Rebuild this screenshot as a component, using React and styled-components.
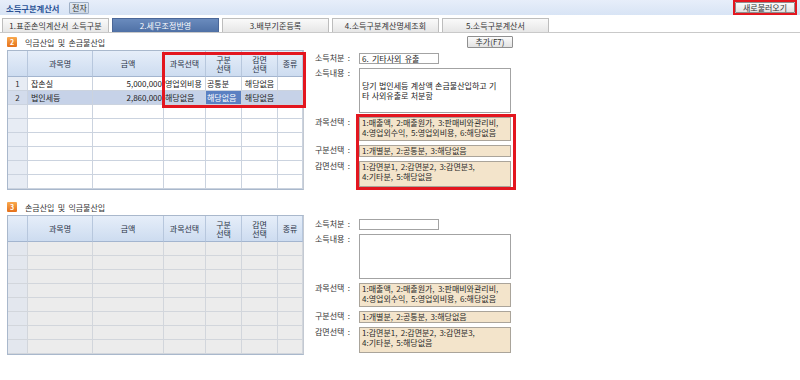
import React from "react";
import styled, { createGlobalStyle } from "styled-components";

const GlobalStyle = createGlobalStyle`
  html, body { margin: 0; padding: 0; background: #fff; }
  body {
    font-family: "Noto Sans CJK KR", "Noto Sans", sans-serif;
    font-size: 8px;
    word-spacing: 1.5px;
    color: #222;
  }
  * { box-sizing: border-box; }
`;

const Page = styled.div`
  width: 800px;
  height: 380px;
  overflow: hidden;
  background: #fff;
`;

const TitleBar = styled.div`
  height: 15px;
  display: flex;
  align-items: center;
  justify-content: space-between;
  padding: 0 3px 0 6px;
  background: linear-gradient(#e7eefa, #d8e4f5);
`;

const TitleGroup = styled.div`
  display: flex;
  align-items: center;
  gap: 10px;
`;

const Title = styled.span`
  font-weight: 700;
  font-size: 8.3px;
  color: #2b5396;
`;

const Btn = styled.button`
  height: ${({ $h }) => $h || 12}px;
  width: ${({ $w }) => ($w ? `${$w}px` : "auto")};
  padding: 0;
  margin: 0;
  font: inherit;
  font-size: 8px;
  line-height: 1;
  white-space: nowrap;
  color: #333;
  border: 1px solid ${({ $tone }) => ($tone === "blue" ? "#9fb0c6" : "#8f8f8f")};
  border-radius: 1px;
  background: ${({ $tone }) =>
    $tone === "blue"
      ? "linear-gradient(#e3eaf3, #ccd7e5)"
      : "linear-gradient(#fbfbfb, #e2e2e2)"};
  display: flex;
  align-items: center;
  justify-content: center;
`;

const RedFrame = styled.div`
  border: 2px solid #e3161f;
  padding: 0;
`;

const TabRow = styled.div`
  display: flex;
  gap: 3px;
  margin-top: 3px;
  padding-left: 2px;
  height: 15px;
  border-bottom: 1px solid #c9c9c9;
`;

const Tab = styled.div`
  width: 107px;
  height: 14px;
  display: flex;
  align-items: center;
  justify-content: center;
  font-size: 8px;
  letter-spacing: 0.1px;
  white-space: nowrap;
  border: 1px solid ${({ $active }) => ($active ? "#4b6798" : "#bdbdbd")};
  border-bottom: none;
  color: ${({ $active }) => ($active ? "#fff" : "#333")};
  background: ${({ $active }) =>
    $active
      ? "linear-gradient(#6a8bbd, #4f71a6)"
      : "linear-gradient(#fafafa, #e6e6e6)"};
`;

const Section = styled.section`
  display: grid;
  grid-template-columns: 297px 198px;
  column-gap: 11px;
  padding-left: 7px;
  margin-top: ${({ $top }) => $top}px;
`;

const SectionHead = styled.div`
  height: 16px;
  display: flex;
  align-items: center;
  gap: 8px;
  font-size: 8px;
  color: #333;
`;

const Badge = styled.span`
  width: 10px;
  height: 10px;
  border-radius: 1px;
  background: linear-gradient(#f9a94f, #e5701a);
  color: #fff;
  font-size: 7px;
  font-weight: 700;
  display: flex;
  align-items: center;
  justify-content: center;
`;

const HeadTools = styled.div`
  height: 16px;
  display: flex;
  align-items: center;
  justify-content: flex-end;
`;

const Grid = styled.div`
  position: relative;
  display: grid;
  grid-template-columns: 20px 65px 71px 42px 36px 36px 25px;
  grid-template-rows: 26px repeat(8, 14px);
  width: 297px;
  border: 1px solid #a9b8cc;
  border-right-color: #c3c9d2;
`;

const HeadCell = styled.div`
  display: flex;
  align-items: center;
  justify-content: center;
  text-align: center;
  white-space: pre-line;
  line-height: 9px;
  color: #2a3346;
  background: linear-gradient(#e6eef9, #cddcf0);
  border-right: 1px solid #b7c7dd;
  border-bottom: 1px solid #a3b5cf;
`;

const tones = {
  white: { bg: "#fff", fg: "#222" },
  num: { bg: "#e7ecf4", fg: "#333" },
  sel: { bg: "#c6d2e8", fg: "#222" },
  selNum: { bg: "#d3dcec", fg: "#333" },
  hit: { bg: "#5a80c2", fg: "#fff" },
  off: { bg: "#ececec", fg: "#222" },
  offNum: { bg: "#e3e7ee", fg: "#333" },
};

const Cell = styled.div`
  display: flex;
  align-items: center;
  justify-content: ${({ $align }) =>
    $align === "right" ? "flex-end" : $align === "center" ? "center" : "flex-start"};
  padding: 0 ${({ $pad }) => $pad ?? 1}px;
  white-space: nowrap;
  overflow: hidden;
  background: ${({ $tone }) => tones[$tone].bg};
  color: ${({ $tone }) => tones[$tone].fg};
  border-right: 1px solid ${({ $tone }) => ($tone.startsWith("off") ? "#d2d6dc" : "#cbd3df")};
  border-bottom: 1px solid ${({ $tone }) => ($tone.startsWith("off") ? "#d2d6dc" : "#cbd3df")};
`;

const Mark = styled.div`
  position: absolute;
  grid-column: ${({ $col }) => $col};
  grid-row: ${({ $row }) => $row};
  inset: ${({ $inset }) => $inset};
  border: 3px solid #e3161f;
  pointer-events: none;
  z-index: 2;
`;

const Form = styled.div`
  position: relative;
  display: grid;
  grid-template-columns: 44px 152px;
  grid-template-rows: 11px 45px 24px 12px 26px;
  row-gap: 4px;
  margin-top: ${({ $top }) => $top}px;
  align-self: start;
`;

const Label = styled.div`
  line-height: 10px;
  white-space: nowrap;
  color: #333;
`;

const Input = styled.div`
  width: 80px;
  height: 11px;
  border: 1px solid #a3a3a3;
  background: #fff;
  padding: 0 2px;
  line-height: 9px;
  white-space: nowrap;
`;

const TextBox = styled.div`
  border: 1px solid #a3a3a3;
  background: #fff;
  padding: 12px 2px 0;
  line-height: 10px;
  word-spacing: 0.5px;
  white-space: pre;
`;

const Hint = styled.div`
  border: 1px solid #aaa49a;
  background: #f3e4cb;
  padding: 0 2px;
  line-height: 10px;
  white-space: pre;
  color: #2a2a2a;
`;

const heads = ["", "과목명", "금액", "과목선택", "구분\n선택", "감면\n선택", "종류"];

const incomeRows = [
  ["1", "잡손실", "5,000,000", "영업외비용", "공통분", "해당없음", ""],
  ["2", "법인세등", "2,860,000", "해당없음", "해당없음", "해당없음", ""],
];

const hints = {
  account: "1:매출액, 2:매출원가, 3:판매비와관리비,\n4:영업외수익, 5:영업외비용, 6:해당없음",
  split: "1:개별분, 2:공통분, 3:해당없음",
  relief: "1:감면분1, 2:감면분2, 3:감면분3,\n4:기타분, 5:해당없음",
};

const aligns = ["center", "left", "right", "left", "left", "center", "left"];
const pads = [1, 3, 1, 1, 1, 1, 1];

const DataGrid = ({ rows, disabled, marked }) => {
  const filled = [...rows];
  while (filled.length < 8) filled.push(["", "", "", "", "", "", ""]);
  return (
    <Grid>
      {heads.map((h, i) => (
        <HeadCell key={`h${i}`}>{h}</HeadCell>
      ))}
      {filled.map((row, r) =>
        row.map((v, c) => {
          const selected = !disabled && r === 1 && rows.length > 1;
          let tone = "white";
          if (disabled) tone = c === 0 ? "offNum" : "off";
          else if (selected) tone = c === 0 ? "selNum" : c === 4 ? "hit" : "sel";
          else if (c === 0) tone = "num";
          return (
            <Cell key={`${r}-${c}`} $tone={tone} $align={aligns[c]} $pad={pads[c]}>
              {v}
            </Cell>
          );
        })
      )}
      {marked && <Mark $col="4 / 8" $row="1 / 4" $inset="1px -3px -3px -2px" />}
    </Grid>
  );
};

const SideForm = ({ top, disposal, content, marked }) => (
  <Form $top={top}>
    <Label>소득처분 :</Label>
    <Input>{disposal}</Input>
    <Label>소득내용 :</Label>
    <TextBox>{content}</TextBox>
    <Label>과목선택 :</Label>
    <Hint>{hints.account}</Hint>
    <Label>구분선택 :</Label>
    <Hint>{hints.split}</Hint>
    <Label>감면선택 :</Label>
    <Hint>{hints.relief}</Hint>
    {marked && <Mark $col="2" $row="3 / 6" $inset="-3px -3px -3px -3px" />}
  </Form>
);

const tabs = [
  "1.표준손익계산서  소득구분",
  "2.세무조정반영",
  "3.배부기준등록",
  "4.소득구분계산명세조회",
  "5.소득구분계산서",
];

export default function App() {
  return (
    <Page>
      <GlobalStyle />
      <TitleBar>
        <TitleGroup>
          <Title>소득구분계산서</Title>
          <Btn $tone="blue" $w={20} $h={12}>전자</Btn>
        </TitleGroup>
        <RedFrame>
          <Btn $w={60} $h={11}>새로불러오기</Btn>
        </RedFrame>
      </TitleBar>

      <TabRow>
        {tabs.map((t, i) => (
          <Tab key={t} $active={i === 1}>{t}</Tab>
        ))}
      </TabRow>

      <Section $top={1}>
        <SectionHead>
          <Badge>2</Badge>
          익금산입 및 손금불산입
        </SectionHead>
        <HeadTools>
          <Btn $w={46} $h={12}>추가(F7)</Btn>
        </HeadTools>
        <DataGrid rows={incomeRows} marked />
        <SideForm
          top={3}
          marked
          disposal="6. 기타사외 유출"
          content={"당기 법인세등 계상액 손금불산입하고 기\n타 사외유출로 처분함"}
        />
      </Section>

      <Section $top={9}>
        <SectionHead>
          <Badge>3</Badge>
          손금산입 및 익금불산입
        </SectionHead>
        <HeadTools />
        <DataGrid rows={[]} disabled />
        <SideForm top={4} disposal="" content="" />
      </Section>
    </Page>
  );
}
